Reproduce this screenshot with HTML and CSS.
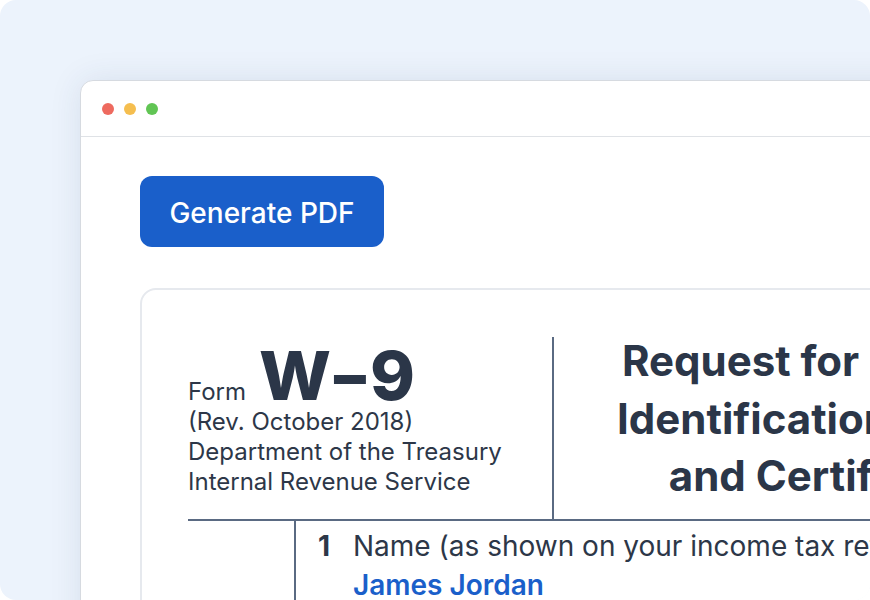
FILE: index.html
```html
<!DOCTYPE html>
<html lang="en">
<head>
<meta charset="utf-8">
<title>W-9 Generator</title>
<link rel="stylesheet" href="styles.css">
</head>
<body>
<div class="frame">
  <div class="window">
    <div class="titlebar">
      <span class="dot dot-red"></span>
      <span class="dot dot-yellow"></span>
      <span class="dot dot-green"></span>
    </div>
    <div class="content">
      <button class="btn-generate" type="button">Generate PDF</button>
      <div class="card">
        <div class="form-header">
          <div class="form-id">
            <div class="form-line"><span class="form-label">Form</span><span class="form-number">W<span class="form-dash">-</span>9</span></div>
            <div class="form-meta">(Rev. October 2018)</div>
            <div class="form-meta">Department of the Treasury</div>
            <div class="form-meta">Internal Revenue Service</div>
          </div>
          <div class="form-title">
            <h1>Request for Taxpayer<br>Identification Number<br>and Certification</h1>
          </div>
        </div>
        <div class="form-row">
          <div class="row-side"></div>
          <div class="row-main">
            <span class="row-num">1</span>
            <div class="row-field">
              <div class="row-label">Name (as shown on your income tax return). Name is required on this line.</div>
              <div class="row-value">James Jordan</div>
            </div>
          </div>
        </div>
      </div>
    </div>
  </div>
</div>
</body>
</html>
```

FILE: styles.css
```css
* { box-sizing: border-box; }
html, body { margin: 0; padding: 0; background: #ffffff; }
body { font-family: "Inter", "Liberation Sans", sans-serif; color: #2d3748; }

.frame {
  width: 870px;
  height: 600px;
  background: #ecf3fc;
  border-radius: 16px;
  overflow: hidden;
  padding: 80px 0 0 80px;
}

.window {
  width: 1200px;
  height: 700px;
  background: #ffffff;
  border: 1px solid #d6dae0;
  border-radius: 13px 0 0 0;
  box-shadow: 0 0 32px rgba(40, 60, 100, 0.10);
}

.titlebar {
  height: 56px;
  border-bottom: 1px solid #dfe2e6;
  display: flex;
  align-items: center;
  gap: 10px;
  padding-left: 21px;
}
.dot { width: 12px; height: 12px; border-radius: 50%; display: block; }
.dot-red { background: #ee6a5f; }
.dot-yellow { background: #f5be4f; }
.dot-green { background: #61c554; }

.content { padding: 39px 0 0 59px; }

.btn-generate {
  display: block;
  width: 244px;
  height: 71px;
  border: 0;
  border-radius: 12px;
  background: #1a5fca;
  color: #ffffff;
  font-family: "Inter", "Liberation Sans", sans-serif;
  font-size: 28px;
  font-weight: 500;
  padding: 2px 0 0 0;
}

.card {
  margin-top: 41px;
  width: 1080px;
  border: 2px solid #e6e9ee;
  border-radius: 16px;
  padding: 47px 46px 40px 46px;
  background: #ffffff;
}

.form-header {
  display: grid;
  grid-template-columns: 366px 574px;
  border-bottom: 2px solid #5a6a82;
}

.form-id {
  border-right: 2px solid #5a6a82;
  padding-top: 6px;
}
.form-line {
  font-size: 68px;
  line-height: 64px;
  font-weight: 800;
  color: #2b3648;
}
.form-label {
  font-size: 24px;
  line-height: 20px;
  font-weight: 400;
  color: #2d3748;
}
.form-number {
  margin-left: 13px;
}
.form-dash {
  display: inline-block;
  transform: scaleX(1.4);
  margin: 0 4px 0 3px;
}
.form-meta {
  font-size: 24px;
  line-height: 30px;
  color: #2d3748;
}

.form-title { padding-bottom: 14px; }
.form-title h1 {
  margin: -5px 0 0 0;
  font-size: 42px;
  line-height: 57.5px;
  font-weight: 700;
  text-align: center;
  color: #2b3648;
}

.form-row {
  display: grid;
  grid-template-columns: 108px 1fr;
}
.row-side { border-right: 2px solid #5a6a82; min-height: 100px; }
.row-main {
  display: flex;
  padding: 6px 0 0 22px;
  font-size: 28px;
  line-height: 39px;
}
.row-num { width: 35px; font-weight: 700; flex: none; }
.row-field { white-space: nowrap; }
.row-label { color: #2d3748; }
.row-value { color: #1a5fca; font-weight: 600; }
```
